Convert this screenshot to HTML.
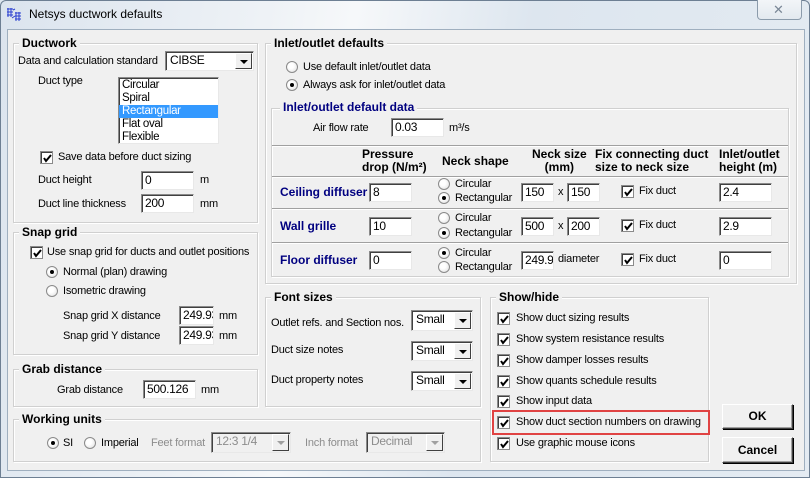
<!DOCTYPE html>
<html><head><meta charset="utf-8"><style>
*{box-sizing:border-box;margin:0;padding:0}
body{width:810px;height:478px;overflow:hidden;background:#dfe7ef;font-family:"Liberation Sans",Arial,sans-serif;font-size:11px;color:#000;position:relative}
#frame{position:absolute;left:0;top:0;width:810px;height:478px;background:linear-gradient(100deg,#dbe4ee 0%,#eef2f6 30%,#f6f8fa 40%,#dde6ef 60%,#e4ebf2 100%);border:1px solid #6d7f93;border-radius:6px 6px 0 0}
#client{position:absolute;left:7px;top:29px;width:798px;height:442px;background:#f0f0f0;border:1px solid #9fafbf}
.a{position:absolute;white-space:nowrap;line-height:14px;letter-spacing:-0.2px}
.b{font-weight:bold;font-size:12px;letter-spacing:0}
.nv{color:#000080;font-weight:bold;font-size:12px;letter-spacing:0}
.g{position:absolute;border:1px solid #d0d0d0;box-shadow:inset 1px 1px 0 #fff,1px 1px 0 #fff}
.gl{position:absolute;background:#f0f0f0;padding:0 3px;font-weight:bold;font-size:12px;line-height:14px;white-space:nowrap}
.in{position:absolute;background:#fff;border:1px solid;border-color:#8a8a8a #e8e8e8 #e8e8e8 #8a8a8a;box-shadow:inset 1px 1px 0 #404040;padding-left:3px;line-height:16px;font-size:12px;overflow:hidden;white-space:nowrap;letter-spacing:-0.3px}
.cb{position:absolute;width:13px;height:13px;background:#fff;border:1px solid #8a8a8a;box-shadow:inset 1px 1px 0 #404040}
.cb svg{position:absolute;left:1px;top:1px}
.rd{position:absolute;width:12px;height:12px;border-radius:50%;background:radial-gradient(circle at 40% 40%,#fff 30%,#dcdcdc 100%);border:1px solid #8a8a8a}
.rd.on::after{content:"";position:absolute;left:3px;top:3px;width:4px;height:4px;border-radius:50%;background:#000}
.cm{position:absolute;background:#fff;border:1px solid;border-color:#8a8a8a #e8e8e8 #e8e8e8 #8a8a8a;box-shadow:inset 1px 1px 0 #404040;padding-left:4px;font-size:12px;line-height:17px;letter-spacing:-0.3px}
.cm .dd{position:absolute;right:1px;top:1px;bottom:1px;width:17px;background:#f0f0f0;border:1px solid;border-color:#fff #404040 #404040 #fff}
.cm .dd::after{content:"";position:absolute;left:4px;top:6px;border-left:4px solid transparent;border-right:4px solid transparent;border-top:4px solid #000}
.cm.dis{background:#f0f0f0;color:#8d8d8d}
.cm.dis .dd::after{border-top-color:#a0a0a0}
.ln{position:absolute;height:1px;background:#a0a0a0;box-shadow:0 1px 0 #fff}
.btn{position:absolute;background:#f0f0f0;border:1px solid;border-color:#fff #404040 #404040 #fff;box-shadow:1px 1px 0 #000,inset -1px -1px 0 #a0a0a0;font-weight:bold;font-size:12px;text-align:center}
.dim{color:#8d8d8d}
.lb div{padding-left:3px}
</style></head><body>
<div id="frame"></div>
<svg style="position:absolute;left:6px;top:7px" width="17" height="15" viewBox="0 0 17 15"><g stroke="#2a3fd0" stroke-width="1" fill="none"><path d="M1 2h6M1 5h6M1 8h6M2 1v9M5 1v9M7 3l2 -1M9 6h6M9 9h6M9 12h6M10 5v9M13 5v9M6 11l3 -2"/></g></svg>
<div class="a" style="left:29px;top:7px;font-size:12px;letter-spacing:0">Netsys ductwork defaults</div>
<div style="position:absolute;left:757px;top:0;width:45px;height:20px;border:1px solid #8b9bab;border-top:none;border-radius:0 0 4px 4px;background:linear-gradient(#f2f5f8,#e3e9ef)"></div>
<div class="a" style="left:773px;top:3px;color:#7a8796;font-size:13px">✕</div>
<div id="client"></div>

<div class="g" style="left:13px;top:43px;width:245px;height:180px"></div>
<div class="gl" style="left:19px;top:36px">Ductwork</div>
<div class="a" style="left:18px;top:54px">Data and calculation standard</div>
<div class="cm" style="left:165px;top:51px;width:89px;height:20px">CIBSE<div class="dd"></div></div>
<div class="a" style="left:38px;top:74px">Duct type</div>
<div class="in lb" style="left:118px;top:77px;width:101px;height:67px;padding:0;line-height:13px;font-size:11.5px">
<div style="padding-top:1px">Circular</div><div>Spiral</div><div style="background:#3399ff;color:#fff">Rectangular</div><div>Flat oval</div><div>Flexible</div></div>
<div class="cb" style="left:40px;top:151px"><svg width="11" height="11"><path d="M2 5l2 3 5-6" stroke="#000" stroke-width="2" fill="none"/></svg></div>
<div class="a" style="left:58px;top:150px">Save data before duct sizing</div>
<div class="a" style="left:38px;top:173px">Duct height</div>
<div class="in" style="left:141px;top:171px;width:53px;height:19px">0</div>
<div class="a" style="left:200px;top:173px">m</div>
<div class="a" style="left:38px;top:197px">Duct line thickness</div>
<div class="in" style="left:141px;top:194px;width:53px;height:19px">200</div>
<div class="a" style="left:200px;top:197px">mm</div>

<div class="g" style="left:13px;top:232px;width:245px;height:123px"></div>
<div class="gl" style="left:19px;top:225px">Snap grid</div>
<div class="cb" style="left:30px;top:246px"><svg width="11" height="11"><path d="M2 5l2 3 5-6" stroke="#000" stroke-width="2" fill="none"/></svg></div>
<div class="a" style="left:47px;top:245px">Use snap grid for ducts and outlet positions</div>
<div class="rd on" style="left:46px;top:266px"></div>
<div class="a" style="left:63px;top:265px">Normal (plan) drawing</div>
<div class="rd" style="left:46px;top:285px"></div>
<div class="a" style="left:63px;top:284px">Isometric drawing</div>
<div class="a" style="left:63px;top:309px">Snap grid X distance</div>
<div class="in" style="left:179px;top:306px;width:35px;height:19px">249.93</div>
<div class="a" style="left:219px;top:309px">mm</div>
<div class="a" style="left:63px;top:329px">Snap grid Y distance</div>
<div class="in" style="left:179px;top:326px;width:35px;height:19px">249.93</div>
<div class="a" style="left:219px;top:329px">mm</div>

<div class="g" style="left:13px;top:369px;width:245px;height:38px"></div>
<div class="gl" style="left:19px;top:362px">Grab distance</div>
<div class="a" style="left:57px;top:383px">Grab distance</div>
<div class="in" style="left:143px;top:380px;width:53px;height:19px">500.126</div>
<div class="a" style="left:201px;top:383px">mm</div>

<div class="g" style="left:13px;top:419px;width:468px;height:43px"></div>
<div class="gl" style="left:19px;top:412px">Working units</div>
<div class="rd on" style="left:47px;top:437px"></div>
<div class="a" style="left:63px;top:436px">SI</div>
<div class="rd" style="left:84px;top:437px"></div>
<div class="a" style="left:101px;top:436px">Imperial</div>
<div class="a dim" style="left:151px;top:436px">Feet format</div>
<div class="cm dis" style="left:211px;top:432px;width:80px;height:21px">12:3 1/4<div class="dd"></div></div>
<div class="a dim" style="left:305px;top:436px">Inch format</div>
<div class="cm dis" style="left:366px;top:432px;width:79px;height:21px">Decimal<div class="dd"></div></div>

<div class="g" style="left:265px;top:43px;width:532px;height:241px"></div>
<div class="gl" style="left:271px;top:36px">Inlet/outlet defaults</div>
<div class="rd" style="left:286px;top:61px"></div>
<div class="a" style="left:303px;top:60px">Use default inlet/outlet data</div>
<div class="rd on" style="left:286px;top:79px"></div>
<div class="a" style="left:303px;top:78px">Always ask for inlet/outlet data</div>

<div class="g" style="left:271px;top:108px;width:518px;height:169px"></div>
<div class="gl nv" style="left:280px;top:100px">Inlet/outlet default data</div>
<div class="a" style="left:313px;top:121px">Air flow rate</div>
<div class="in" style="left:391px;top:118px;width:53px;height:19px">0.03</div>
<div class="a" style="left:449px;top:121px">m³/s</div>
<div class="ln" style="left:272px;top:145px;width:516px"></div>
<div class="a b" style="left:362px;top:148px;line-height:13px">Pressure<br>drop (N/m²)</div>
<div class="a b" style="left:442px;top:154px">Neck shape</div>
<div class="a b" style="left:532px;top:148px;line-height:13px;text-align:center">Neck size<br>(mm)</div>
<div class="a b" style="left:595px;top:148px;line-height:13px">Fix connecting duct<br>size to neck size</div>
<div class="a b" style="left:719px;top:148px;line-height:13px">Inlet/outlet<br>height (m)</div>
<div class="ln" style="left:272px;top:176px;width:516px"></div>
<div class="ln" style="left:272px;top:208px;width:516px"></div>
<div class="ln" style="left:272px;top:242px;width:516px"></div>

<div class="a nv" style="left:280px;top:185px">Ceiling diffuser</div>
<div class="in" style="left:369px;top:183px;width:43px;height:19px">8</div>
<div class="rd" style="left:438px;top:178px"></div><div class="a" style="left:455px;top:177px">Circular</div>
<div class="rd on" style="left:438px;top:192px"></div><div class="a" style="left:455px;top:191px">Rectangular</div>
<div class="in" style="left:521px;top:183px;width:33px;height:19px">150</div>
<div class="a" style="left:558px;top:185px">x</div>
<div class="in" style="left:567px;top:183px;width:33px;height:19px">150</div>
<div class="cb" style="left:621px;top:185px"><svg width="11" height="11"><path d="M2 5l2 3 5-6" stroke="#000" stroke-width="2" fill="none"/></svg></div>
<div class="a" style="left:639px;top:184px">Fix duct</div>
<div class="in" style="left:719px;top:183px;width:53px;height:19px">2.4</div>

<div class="a nv" style="left:280px;top:219px">Wall grille</div>
<div class="in" style="left:369px;top:217px;width:43px;height:19px">10</div>
<div class="rd" style="left:438px;top:212px"></div><div class="a" style="left:455px;top:211px">Circular</div>
<div class="rd on" style="left:438px;top:227px"></div><div class="a" style="left:455px;top:226px">Rectangular</div>
<div class="in" style="left:521px;top:217px;width:33px;height:19px">500</div>
<div class="a" style="left:558px;top:219px">x</div>
<div class="in" style="left:567px;top:217px;width:33px;height:19px">200</div>
<div class="cb" style="left:621px;top:219px"><svg width="11" height="11"><path d="M2 5l2 3 5-6" stroke="#000" stroke-width="2" fill="none"/></svg></div>
<div class="a" style="left:639px;top:218px">Fix duct</div>
<div class="in" style="left:719px;top:217px;width:53px;height:19px">2.9</div>

<div class="a nv" style="left:280px;top:253px">Floor diffuser</div>
<div class="in" style="left:369px;top:251px;width:43px;height:19px">0</div>
<div class="rd on" style="left:438px;top:247px"></div><div class="a" style="left:455px;top:246px">Circular</div>
<div class="rd" style="left:438px;top:261px"></div><div class="a" style="left:455px;top:260px">Rectangular</div>
<div class="in" style="left:521px;top:251px;width:33px;height:19px">249.9</div>
<div class="a" style="left:558px;top:252px">diameter</div>
<div class="cb" style="left:621px;top:253px"><svg width="11" height="11"><path d="M2 5l2 3 5-6" stroke="#000" stroke-width="2" fill="none"/></svg></div>
<div class="a" style="left:639px;top:252px">Fix duct</div>
<div class="in" style="left:719px;top:251px;width:53px;height:19px">0</div>

<div class="g" style="left:265px;top:297px;width:216px;height:110px"></div>
<div class="gl" style="left:271px;top:290px">Font sizes</div>
<div class="a" style="left:271px;top:316px">Outlet refs. and Section nos.</div>
<div class="cm" style="left:411px;top:310px;width:62px;height:21px">Small<div class="dd"></div></div>
<div class="a" style="left:271px;top:343px">Duct size notes</div>
<div class="cm" style="left:411px;top:341px;width:62px;height:20px">Small<div class="dd"></div></div>
<div class="a" style="left:271px;top:373px">Duct property notes</div>
<div class="cm" style="left:411px;top:371px;width:62px;height:20px">Small<div class="dd"></div></div>

<div class="g" style="left:490px;top:297px;width:219px;height:165px"></div>
<div class="gl" style="left:496px;top:290px">Show/hide</div>
<div class="cb" style="left:497px;top:312px"><svg width="11" height="11"><path d="M2 5l2 3 5-6" stroke="#000" stroke-width="2" fill="none"/></svg></div><div class="a" style="left:516px;top:311px">Show duct sizing results</div>
<div class="cb" style="left:497px;top:333px"><svg width="11" height="11"><path d="M2 5l2 3 5-6" stroke="#000" stroke-width="2" fill="none"/></svg></div><div class="a" style="left:516px;top:332px">Show system resistance results</div>
<div class="cb" style="left:497px;top:354px"><svg width="11" height="11"><path d="M2 5l2 3 5-6" stroke="#000" stroke-width="2" fill="none"/></svg></div><div class="a" style="left:516px;top:353px">Show damper losses results</div>
<div class="cb" style="left:497px;top:375px"><svg width="11" height="11"><path d="M2 5l2 3 5-6" stroke="#000" stroke-width="2" fill="none"/></svg></div><div class="a" style="left:516px;top:374px">Show quants schedule results</div>
<div class="cb" style="left:497px;top:395px"><svg width="11" height="11"><path d="M2 5l2 3 5-6" stroke="#000" stroke-width="2" fill="none"/></svg></div><div class="a" style="left:516px;top:394px">Show input data</div>
<div class="cb" style="left:497px;top:416px"><svg width="11" height="11"><path d="M2 5l2 3 5-6" stroke="#000" stroke-width="2" fill="none"/></svg></div><div class="a" style="left:516px;top:415px">Show duct section numbers on drawing</div>
<div class="cb" style="left:497px;top:437px"><svg width="11" height="11"><path d="M2 5l2 3 5-6" stroke="#000" stroke-width="2" fill="none"/></svg></div><div class="a" style="left:516px;top:436px">Use graphic mouse icons</div>
<div style="position:absolute;left:492px;top:410px;width:218px;height:25px;border:2px solid #e04343"></div>

<div class="btn" style="left:722px;top:404px;width:71px;height:25px;line-height:23px">OK</div>
<div class="btn" style="left:722px;top:437px;width:71px;height:26px;line-height:24px">Cancel</div>
</body></html>
